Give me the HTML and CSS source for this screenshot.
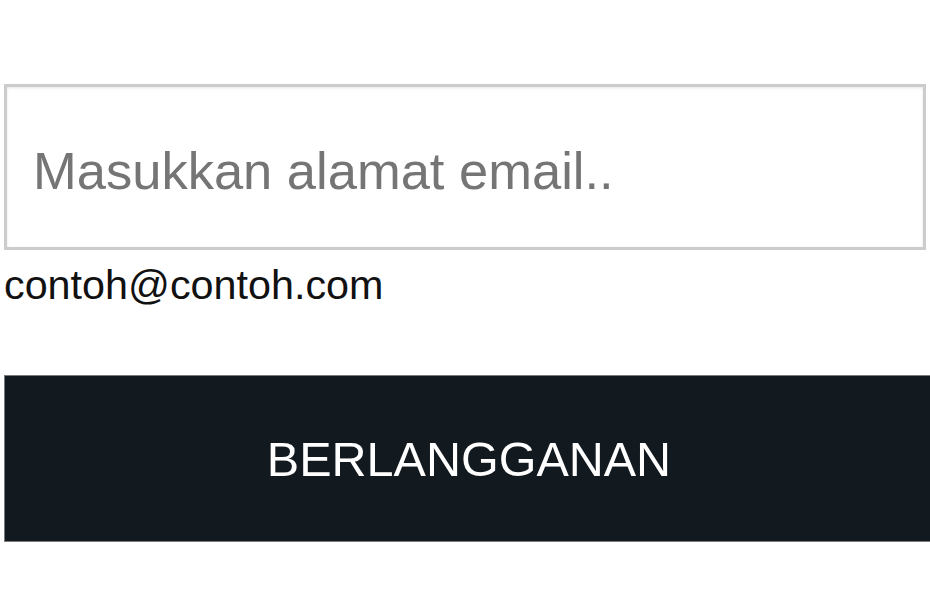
FILE: index.html
```html
<!DOCTYPE html>
<html lang="id">
<head>
  <title>Berlangganan</title>
  <meta charset="utf-8">
  <meta name="viewport" content="width=device-width, initial-scale=1">
  <link rel="stylesheet" href="styles.css">
</head>
<body>
  <form class="subscribe">
    <input class="email-input" type="email" placeholder="Masukkan alamat email..">
    <p class="hint">contoh@contoh.com</p>
    <button class="submit" type="button">BERLANGGANAN</button>
  </form>
</body>
</html>
```

FILE: styles.css
```css
*, *::before, *::after {
  margin: 0;
  padding: 0;
  box-sizing: border-box;
}

body {
  min-height: 100vh;
  background-color: #FFFFFF;
  color: #111111;
  font-family: "Liberation Sans", Arial, sans-serif;
  overflow: hidden;
}

.subscribe {
  display: flex;
  flex-direction: column;
  align-items: flex-start;
  padding: 84px 0 0 4px;
}

.email-input {
  width: 922px;
  height: 166px;
  padding: 7px 23px 0 26px;
  border: 3px solid #CCCCCC;
  box-shadow: inset 0 1px 3px rgba(0, 0, 0, 0.1);
  background-color: #FFFFFF;
  font-family: inherit;
  font-size: 52.5px;
  color: #333333;
  outline: none;
}

.email-input::placeholder {
  color: #757575;
}

.hint {
  margin-top: 12px;
  font-size: 41.3px;
  line-height: 47px;
  color: #111111;
}

.submit {
  width: 930px;
  height: 167px;
  margin-top: 66px;
  flex-shrink: 0;
  border: 1px solid #7A7A7A;
  background-color: #12191F;
  color: #FFFFFF;
  font-family: inherit;
  font-size: 48.5px;
}
```
